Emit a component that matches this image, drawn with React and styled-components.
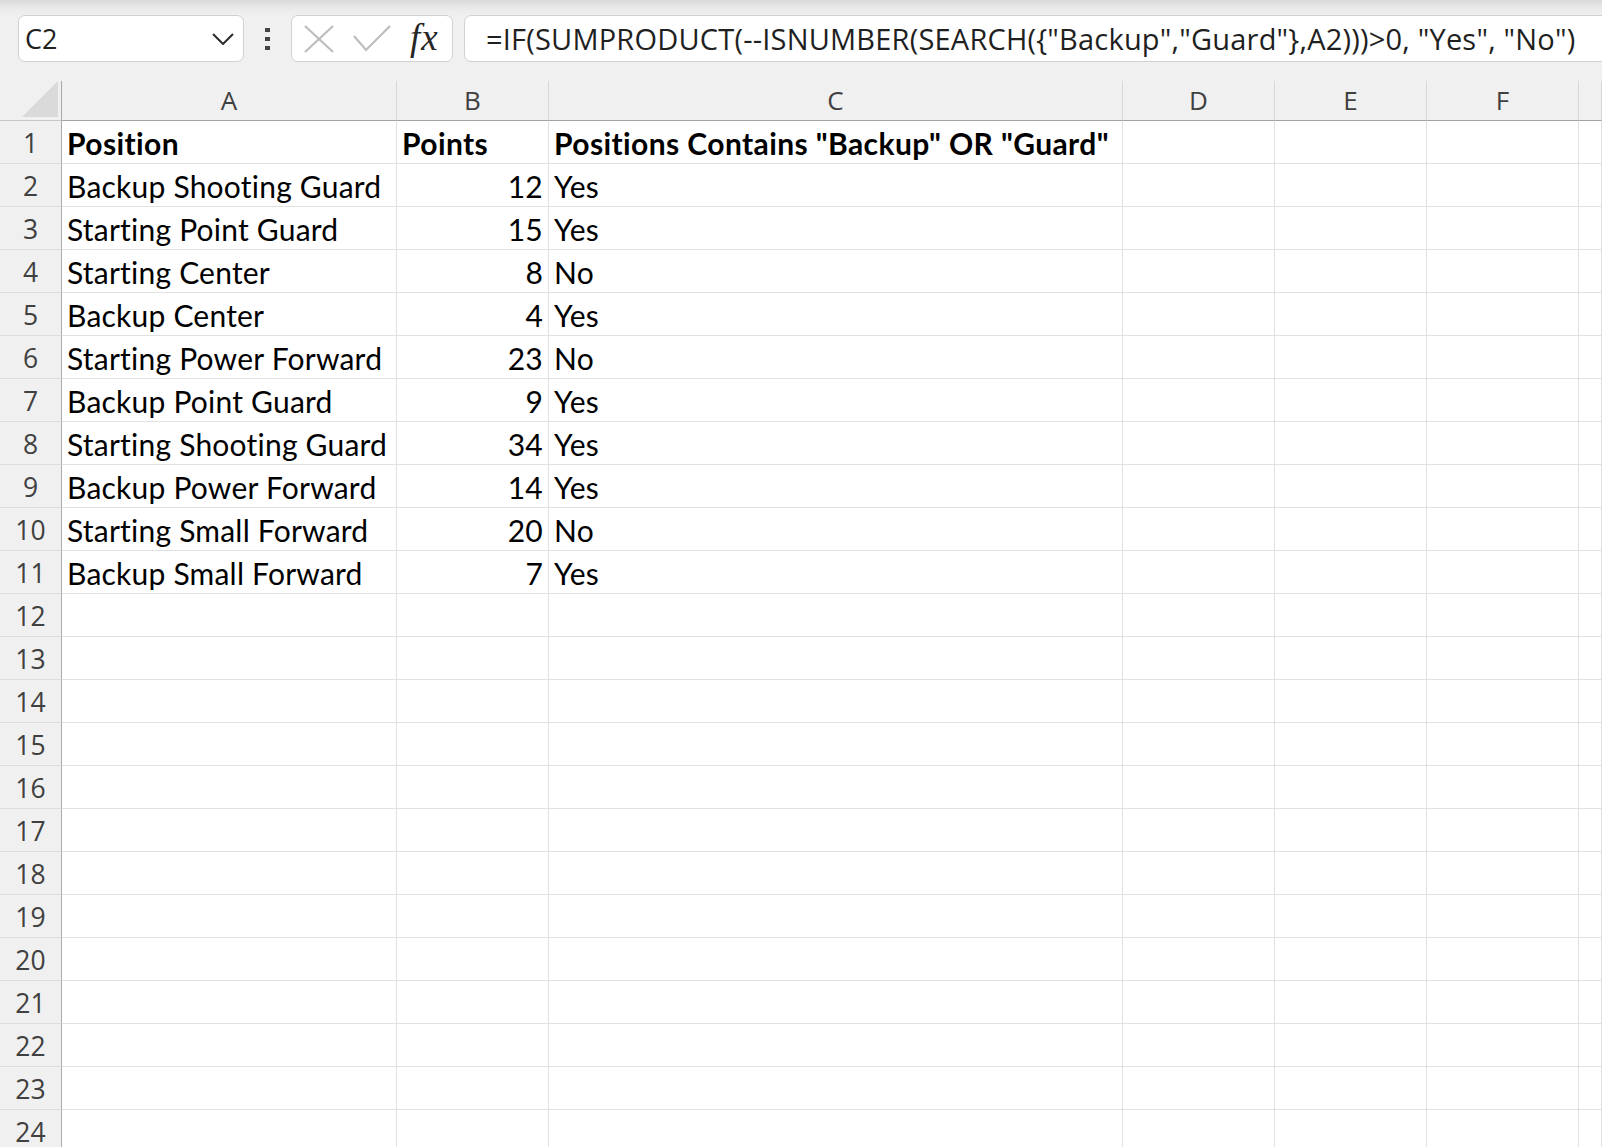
import React from "react";
import styled, { createGlobalStyle } from "styled-components";

const Global = createGlobalStyle`
  html, body { margin: 0; padding: 0; background: #f0f0f0; }
  * { box-sizing: border-box; }
`;

const Page = styled.div`
  width: 1602px;
  height: 1147px;
  overflow: hidden;
  background: #f0f0f0;
  display: flex;
  flex-direction: column;
`;

const FormulaBar = styled.div`
  height: 81px;
  flex: none;
  display: flex;
  align-items: flex-start;
  padding: 15px 0 0 18px;
  background: linear-gradient(#dadada 0px, #ececec 10px, #f0f0f0 16px);
`;

const Box = styled.div`
  height: 47px;
  background: #fff;
  border: 1px solid #d1d1d1;
  border-radius: 7px;
  display: flex;
  align-items: center;
`;

const NameBox = styled(Box)`
  width: 226px;
  justify-content: space-between;
  padding: 0 9px 0 6px;
  font: 400 27px/1 "Open Sans", sans-serif;
  color: #1f1f1f;
`;

const MoreDots = styled.div`
  width: 47px;
  height: 47px;
  display: flex;
  flex-direction: column;
  align-items: center;
  justify-content: center;
  gap: 5px;
`;

const Dot = styled.span`
  width: 5px;
  height: 4px;
  background: #444;
`;

const FxBox = styled(Box)`
  width: 162px;
  padding-left: 12px;
`;

const FxText = styled.span`
  font: italic 400 37px/1 "Liberation Serif", serif;
  color: #262626;
  margin-left: 19px;
  margin-top: -3px;
  letter-spacing: 1px;
`;

const FormulaBox = styled(Box)`
  flex: 1;
  margin-left: 11px;
  margin-right: -20px;
  padding-left: 21px;
  font: 400 29px/1 "Open Sans", sans-serif;
  letter-spacing: 0.2px;
  color: #1f1f1f;
  white-space: nowrap;
  overflow: hidden;
  border-radius: 7px 0 0 7px;
`;

const Sheet = styled.div`
  display: grid;
  grid-template-columns: 62px 335px 152px 574px 152px 152px 152px 1fr;
  grid-template-rows: 40px;
  grid-auto-rows: 43px;
  height: 1066px;
  overflow: hidden;
`;

const Corner = styled.div`
  background: #f0f0f0;
  border-right: 1px solid #a9a9a9;
  border-bottom: 1px solid #c8c8c8;
  display: flex;
  align-items: flex-end;
  justify-content: flex-end;
  padding: 0 3px 3px 0;
`;

const ColHead = styled.div`
  background: #f0f0f0;
  border-right: 1px solid #d8d8d8;
  border-bottom: 1px solid #a3a3a3;
  font: 400 26px/39px "Open Sans", sans-serif;
  color: #404040;
  text-align: center;
`;

const RowHead = styled.div`
  background: #f0f0f0;
  border-right: 1px solid #a9a9a9;
  border-bottom: 1px solid #dcdcdc;
  padding-top: 1px;
  font: 400 26.5px/42px "Open Sans", sans-serif;
  color: #404040;
  text-align: center;
`;

const Cell = styled.div`
  background: #fff;
  border-right: 1px solid #e1e1e1;
  border-bottom: 1px solid #e1e1e1;
  padding: 1px 5px 0 5px;
  font: ${(p) => (p.$bold ? 700 : 400)} 30px/42px "Lato", sans-serif;
  letter-spacing: ${(p) => (p.$bold ? "0.4px" : "0.22px")};
  color: #000;
  text-align: ${(p) => p.$align || "left"};
  white-space: nowrap;
`;

const cols = ["A", "B", "C", "D", "E", "F", ""];

const data = [
  ["Backup Shooting Guard", 12, "Yes"],
  ["Starting Point Guard", 15, "Yes"],
  ["Starting Center", 8, "No"],
  ["Backup Center", 4, "Yes"],
  ["Starting Power Forward", 23, "No"],
  ["Backup Point Guard", 9, "Yes"],
  ["Starting Shooting Guard", 34, "Yes"],
  ["Backup Power Forward", 14, "Yes"],
  ["Starting Small Forward", 20, "No"],
  ["Backup Small Forward", 7, "Yes"],
];

const formula = '=IF(SUMPRODUCT(--ISNUMBER(SEARCH({"Backup","Guard"},A2)))>0, "Yes", "No")';

const Chevron = () => (
  <svg width="22" height="12" viewBox="0 0 22 12">
    <polyline points="1,1 11,11 21,1" fill="none" stroke="#2b2b2b" strokeWidth="2" />
  </svg>
);

const CancelIcon = () => (
  <svg width="30" height="28" viewBox="0 0 30 28">
    <line x1="1" y1="1" x2="29" y2="27" stroke="#bdbdbd" strokeWidth="2.2" />
    <line x1="29" y1="1" x2="1" y2="27" stroke="#bdbdbd" strokeWidth="2.2" />
  </svg>
);

const CheckIcon = () => (
  <svg width="38" height="28" viewBox="0 0 38 28" style={{ marginLeft: 19 }}>
    <polyline points="1,11 13,25 37,1" fill="none" stroke="#bdbdbd" strokeWidth="2.2" />
  </svg>
);

const CornerTriangle = () => (
  <svg width="36" height="36" viewBox="0 0 36 36">
    <polygon points="36,0 36,36 0,36" fill="#dadada" />
  </svg>
);

export default function App() {
  const rows = [];
  rows.push(
    <React.Fragment key="r1">
      <RowHead>1</RowHead>
      <Cell $bold>Position</Cell>
      <Cell $bold>Points</Cell>
      <Cell $bold>{'Positions Contains "Backup" OR "Guard"'}</Cell>
      <Cell />
      <Cell />
      <Cell />
      <Cell />
    </React.Fragment>
  );
  for (let i = 2; i <= 24; i++) {
    const d = data[i - 2];
    rows.push(
      <React.Fragment key={"r" + i}>
        <RowHead>{i}</RowHead>
        <Cell>{d ? d[0] : ""}</Cell>
        <Cell $align="right">{d ? d[1] : ""}</Cell>
        <Cell>{d ? d[2] : ""}</Cell>
        <Cell />
        <Cell />
        <Cell />
        <Cell />
      </React.Fragment>
    );
  }
  return (
    <Page>
      <Global />
      <FormulaBar>
        <NameBox>
          <span>C2</span>
          <Chevron />
        </NameBox>
        <MoreDots>
          <Dot />
          <Dot />
          <Dot />
        </MoreDots>
        <FxBox>
          <CancelIcon />
          <CheckIcon />
          <FxText>fx</FxText>
        </FxBox>
        <FormulaBox>{formula}</FormulaBox>
      </FormulaBar>
      <Sheet>
        <Corner>
          <CornerTriangle />
        </Corner>
        {cols.map((c, i) => (
          <ColHead key={i}>{c}</ColHead>
        ))}
        {rows}
      </Sheet>
    </Page>
  );
}
